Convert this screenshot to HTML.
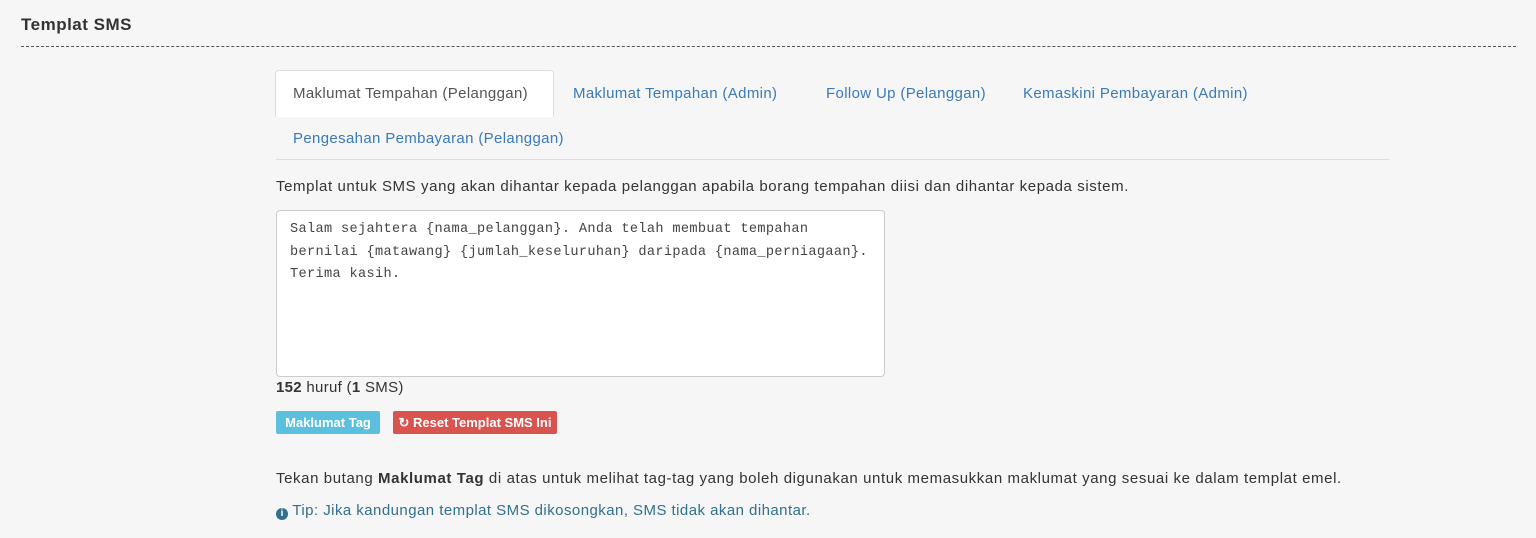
<!DOCTYPE html>
<html><head><meta charset="utf-8"><style>
body{margin:0;width:1536px;height:538px;background:#f6f6f6;font-family:"Liberation Sans",sans-serif;color:#333;font-size:15px;letter-spacing:0.6px;position:relative;overflow:hidden}
.a{position:absolute;white-space:nowrap}
h1{position:absolute;left:21px;top:15px;margin:0;font-size:17px;letter-spacing:0.5px;font-weight:bold;color:#333}
.dash{position:absolute;left:21px;top:46px;width:1495px;border-top:1px dashed #555}
.tab{position:absolute;color:#3a7ab8;font-size:15px;letter-spacing:0.35px;white-space:nowrap}
.act{position:absolute;left:275px;top:70px;width:277px;height:46px;background:#fff;border:1px solid #ddd;border-bottom:none;border-radius:4px 4px 0 0}
.line{position:absolute;left:276px;top:159px;width:1113px;border-top:1px solid #ddd}
.ta{position:absolute;left:276px;top:210px;width:609px;height:167px;background:#fff;border:1px solid #ccc;border-radius:4px;font-family:"Liberation Mono",monospace;font-size:13.6px;letter-spacing:0.34px;line-height:22.6px;color:#444;padding:8px 0 0 13px;box-sizing:border-box;white-space:nowrap}
.btn{position:absolute;top:411px;height:23px;color:#fff;font-size:13px;letter-spacing:0;font-weight:bold;line-height:23px;border-radius:2px;text-align:center}
</style></head><body>
<h1>Templat SMS</h1>
<div class="dash"></div>
<div class="act"></div>
<div class="tab" style="left:293px;top:85px;color:#555">Maklumat Tempahan (Pelanggan)</div>
<div class="tab" style="left:573px;top:85px">Maklumat Tempahan (Admin)</div>
<div class="tab" style="left:826px;top:85px">Follow Up (Pelanggan)</div>
<div class="tab" style="left:1023px;top:85px">Kemaskini Pembayaran (Admin)</div>
<div class="tab" style="left:293px;top:130px">Pengesahan Pembayaran (Pelanggan)</div>
<div class="line"></div>
<div class="a" style="left:276px;top:178px">Templat untuk SMS yang akan dihantar kepada pelanggan apabila borang tempahan diisi dan dihantar kepada sistem.</div>
<div class="ta">Salam sejahtera {nama_pelanggan}. Anda telah membuat tempahan<br>bernilai {matawang} {jumlah_keseluruhan} daripada {nama_perniagaan}.<br>Terima kasih.</div>
<div class="a" style="left:276px;top:379px;letter-spacing:0.3px"><b>152</b> huruf (<b>1</b> SMS)</div>
<div class="btn" style="left:276px;width:104px;background:#5bc0de">Maklumat Tag</div>
<div class="btn" style="left:393px;width:164px;background:#d9534f">&#x21bb; Reset Templat SMS Ini</div>
<div class="a" style="left:276px;top:470px">Tekan butang <b>Maklumat Tag</b> di atas untuk melihat tag-tag yang boleh digunakan untuk memasukkan maklumat yang sesuai ke dalam templat emel.</div>
<div class="a" style="left:276px;top:502px;color:#31708f;letter-spacing:0.45px"><span style="display:inline-block;width:12px;height:12px;border-radius:50%;background:#31708f;color:#fff;font-size:10px;letter-spacing:0;line-height:12px;text-align:center;font-weight:bold;vertical-align:-1px">i</span> Tip: Jika kandungan templat SMS dikosongkan, SMS tidak akan dihantar.</div>
</body></html>
